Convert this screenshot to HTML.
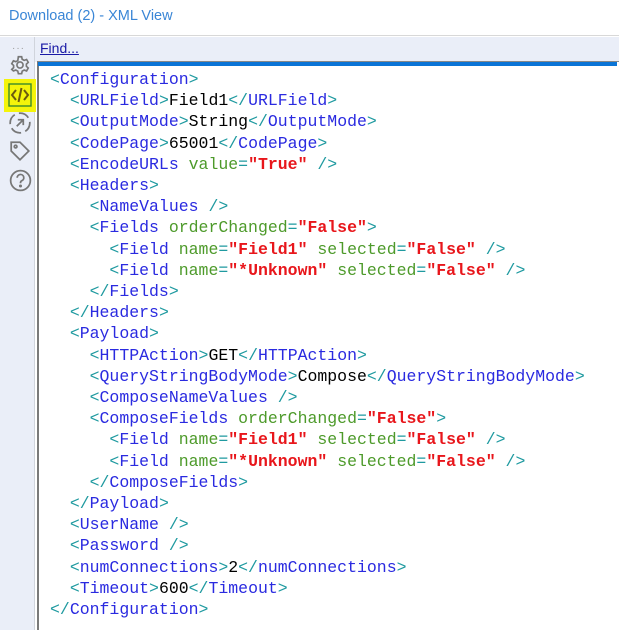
<!DOCTYPE html>
<html><head><meta charset="utf-8"><style>
*{margin:0;padding:0;box-sizing:border-box}
body{width:619px;height:630px;overflow:hidden;background:#fff;font-family:"Liberation Sans",sans-serif;position:relative}
#title{position:absolute;left:0;top:0;width:619px;height:36px;background:#fff;border-bottom:1px solid #d8d8d8;color:#3a86d6;font-size:14.5px;padding:8px 0 0 9px}
#side{position:absolute;left:0;top:37px;width:35px;height:593px;background:#eaeef8;border-right:1px solid #d0d4dc}
#bar{position:absolute;left:35px;top:37px;width:584px;height:25px;background:#eaeef8}
#find{position:absolute;left:40px;top:40px;font-size:14px;color:#1a1aa6;text-decoration:underline}
#ed{position:absolute;left:37px;top:61px;width:582px;height:569px;border-left:2px solid #7a7a7a;border-top:1px solid #888;background:#fff}
#blue{position:absolute;left:38px;top:62px;width:579px;height:4px;background:#0a74d6}
#code{position:absolute;left:50px;top:69px;font-family:"Liberation Mono",monospace;font-size:16.5px;line-height:21.2px;white-space:pre;color:#000}
.b{color:#1f9aa0}.n{color:#2a2ae0}.a{color:#4d9a2a}.v{color:#e8161b;font-weight:bold}
#hl{position:absolute;left:4px;top:79px;width:32px;height:33px;background:#f4f40a}
svg{position:absolute}
</style></head><body>
<div id="title">Download (2) - XML View</div>
<div id="side"></div>
<div id="bar"></div>
<div style="position:absolute;left:12px;top:43px;color:#999;font-size:10px;letter-spacing:1px">···</div>
<div id="find">Find...</div>
<div id="hl"></div>
<svg style="left:9px;top:54px" width="22" height="22" viewBox="0 0 20 20" fill="none" stroke="#777" stroke-width="1.5"><circle cx="10" cy="10" r="2.8"/><path d="M8.5 2.5h3l.5 2.3 1.8 1 2.2-.8 1.5 2.6-1.7 1.6v2l1.7 1.6-1.5 2.6-2.2-.8-1.8 1-.5 2.3h-3l-.5-2.3-1.8-1-2.2.8L2.5 14l1.7-1.6v-2L2.5 8.8 4 6.2l2.2.8 1.8-1z"/></svg>
<svg style="left:8px;top:83px" width="24" height="24" viewBox="0 0 24 24" fill="none" stroke-width="1.4"><rect x="1" y="1" width="22" height="22" stroke="#3a8a2a"/><g stroke="#6a5a10" stroke-width="2"><path d="M8 7l-4 5 4 5M16 7l4 5-4 5M13.5 5l-3 14"/></g></svg>
<svg style="left:8px;top:111px" width="24" height="24" viewBox="0 0 22 22" fill="none" stroke="#777" stroke-width="1.6"><path d="M11 2a9 9 0 0 1 9 9M20 11a9 9 0 0 1-9 9M11 20a9 9 0 0 1-9-9M2 11a9 9 0 0 1 9-9" stroke-dasharray="9 4"/><path d="M8 14l6-6M9 8h5v5"/></svg>
<svg style="left:9px;top:140px" width="22" height="22" viewBox="0 0 20 20" fill="none" stroke="#777" stroke-width="1.6"><path d="M2 2h8l8 8-8 8-8-8z"/><circle cx="6" cy="6" r="1.2"/></svg>
<svg style="left:9px;top:169px" width="23" height="23" viewBox="0 0 21 21" fill="none" stroke="#777" stroke-width="1.6"><circle cx="10.5" cy="10.5" r="9"/><path d="M7.5 8a3 3 0 1 1 4 2.8c-1 .4-1 1.2-1 2.2"/><circle cx="10.5" cy="15.5" r=".6" fill="#777"/></svg>
<div id="ed"></div>
<div id="blue"></div>
<div id="code"><span class="b">&lt;</span><span class="n">Configuration</span><span class="b">&gt;</span>
  <span class="b">&lt;</span><span class="n">URLField</span><span class="b">&gt;</span>Field1<span class="b">&lt;/</span><span class="n">URLField</span><span class="b">&gt;</span>
  <span class="b">&lt;</span><span class="n">OutputMode</span><span class="b">&gt;</span>String<span class="b">&lt;/</span><span class="n">OutputMode</span><span class="b">&gt;</span>
  <span class="b">&lt;</span><span class="n">CodePage</span><span class="b">&gt;</span>65001<span class="b">&lt;/</span><span class="n">CodePage</span><span class="b">&gt;</span>
  <span class="b">&lt;</span><span class="n">EncodeURLs</span> <span class="a">value</span><span class="b">=</span><span class="v">"True"</span> <span class="b">/&gt;</span>
  <span class="b">&lt;</span><span class="n">Headers</span><span class="b">&gt;</span>
    <span class="b">&lt;</span><span class="n">NameValues</span> <span class="b">/&gt;</span>
    <span class="b">&lt;</span><span class="n">Fields</span> <span class="a">orderChanged</span><span class="b">=</span><span class="v">"False"</span><span class="b">&gt;</span>
      <span class="b">&lt;</span><span class="n">Field</span> <span class="a">name</span><span class="b">=</span><span class="v">"Field1"</span> <span class="a">selected</span><span class="b">=</span><span class="v">"False"</span> <span class="b">/&gt;</span>
      <span class="b">&lt;</span><span class="n">Field</span> <span class="a">name</span><span class="b">=</span><span class="v">"*Unknown"</span> <span class="a">selected</span><span class="b">=</span><span class="v">"False"</span> <span class="b">/&gt;</span>
    <span class="b">&lt;/</span><span class="n">Fields</span><span class="b">&gt;</span>
  <span class="b">&lt;/</span><span class="n">Headers</span><span class="b">&gt;</span>
  <span class="b">&lt;</span><span class="n">Payload</span><span class="b">&gt;</span>
    <span class="b">&lt;</span><span class="n">HTTPAction</span><span class="b">&gt;</span>GET<span class="b">&lt;/</span><span class="n">HTTPAction</span><span class="b">&gt;</span>
    <span class="b">&lt;</span><span class="n">QueryStringBodyMode</span><span class="b">&gt;</span>Compose<span class="b">&lt;/</span><span class="n">QueryStringBodyMode</span><span class="b">&gt;</span>
    <span class="b">&lt;</span><span class="n">ComposeNameValues</span> <span class="b">/&gt;</span>
    <span class="b">&lt;</span><span class="n">ComposeFields</span> <span class="a">orderChanged</span><span class="b">=</span><span class="v">"False"</span><span class="b">&gt;</span>
      <span class="b">&lt;</span><span class="n">Field</span> <span class="a">name</span><span class="b">=</span><span class="v">"Field1"</span> <span class="a">selected</span><span class="b">=</span><span class="v">"False"</span> <span class="b">/&gt;</span>
      <span class="b">&lt;</span><span class="n">Field</span> <span class="a">name</span><span class="b">=</span><span class="v">"*Unknown"</span> <span class="a">selected</span><span class="b">=</span><span class="v">"False"</span> <span class="b">/&gt;</span>
    <span class="b">&lt;/</span><span class="n">ComposeFields</span><span class="b">&gt;</span>
  <span class="b">&lt;/</span><span class="n">Payload</span><span class="b">&gt;</span>
  <span class="b">&lt;</span><span class="n">UserName</span> <span class="b">/&gt;</span>
  <span class="b">&lt;</span><span class="n">Password</span> <span class="b">/&gt;</span>
  <span class="b">&lt;</span><span class="n">numConnections</span><span class="b">&gt;</span>2<span class="b">&lt;/</span><span class="n">numConnections</span><span class="b">&gt;</span>
  <span class="b">&lt;</span><span class="n">Timeout</span><span class="b">&gt;</span>600<span class="b">&lt;/</span><span class="n">Timeout</span><span class="b">&gt;</span>
<span class="b">&lt;/</span><span class="n">Configuration</span><span class="b">&gt;</span></div>
</body></html>
